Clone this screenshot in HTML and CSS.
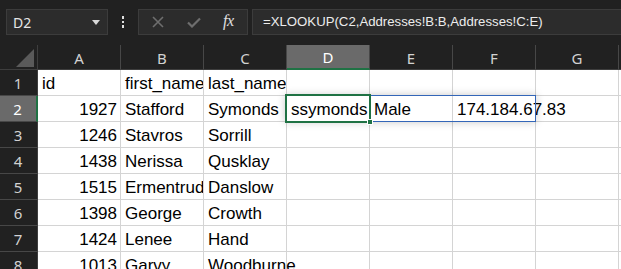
FILE: index.html
```html
<!DOCTYPE html>
<html>
<head>
<meta charset="utf-8">
<link rel="stylesheet" href="styles.css">
</head>
<body>
<div class="app">
  <div class="toolbar">
    <div class="namebox">
      <span class="name">D2</span>
      <svg class="caret" width="8" height="5" viewBox="0 0 8 5"><path d="M0 0H8L4 5Z" fill="#d8d8d8"/></svg>
    </div>
    <div class="dots"><i></i><i></i><i></i></div>
    <div class="buttons">
      <svg class="btn-x" width="12" height="12" viewBox="0 0 12 12"><path d="M1 1L11 11M11 1L1 11" stroke="#6e6e6e" stroke-width="1.6" fill="none"/></svg>
      <svg class="btn-check" width="14" height="11" viewBox="0 0 14 11"><path d="M1 5.5L5 9.5L13 1.5" stroke="#6e6e6e" stroke-width="2.2" fill="none"/></svg>
      <span class="fx">fx</span>
    </div>
    <div class="formula">=XLOOKUP(C2,Addresses!B:B,Addresses!C:E)</div>
  </div>
  <div class="sheet">
    <div class="corner"><span class="tri"></span></div>
    <div class="ch">A</div>
    <div class="ch">B</div>
    <div class="ch">C</div>
    <div class="ch ch-sel">D</div>
    <div class="ch">E</div>
    <div class="ch">F</div>
    <div class="ch">G</div>
    <div class="ch ch-last"></div>

    <div class="rh">1</div>
    <div class="c">id</div><div class="c">first_name</div><div class="c">last_name</div><div class="c"></div><div class="c"></div><div class="c"></div><div class="c"></div><div class="c c-last"></div>

    <div class="rh rh-sel">2</div>
    <div class="c n">1927</div><div class="c">Stafford</div><div class="c">Symonds</div>
    <div class="c active">ssymonds<span class="sel-shadow"></span><span class="sel-range"></span><span class="sel-active"><span class="handle"></span></span></div>
    <div class="c">Male</div><div class="c spill">174.184.67.83</div><div class="c"></div><div class="c c-last"></div>

    <div class="rh">3</div>
    <div class="c n">1246</div><div class="c">Stavros</div><div class="c">Sorrill</div><div class="c"></div><div class="c"></div><div class="c"></div><div class="c"></div><div class="c c-last"></div>

    <div class="rh">4</div>
    <div class="c n">1438</div><div class="c">Nerissa</div><div class="c">Qusklay</div><div class="c"></div><div class="c"></div><div class="c"></div><div class="c"></div><div class="c c-last"></div>

    <div class="rh">5</div>
    <div class="c n">1515</div><div class="c">Ermentrude</div><div class="c">Danslow</div><div class="c"></div><div class="c"></div><div class="c"></div><div class="c"></div><div class="c c-last"></div>

    <div class="rh">6</div>
    <div class="c n">1398</div><div class="c">George</div><div class="c">Crowth</div><div class="c"></div><div class="c"></div><div class="c"></div><div class="c"></div><div class="c c-last"></div>

    <div class="rh">7</div>
    <div class="c n">1424</div><div class="c">Lenee</div><div class="c">Hand</div><div class="c"></div><div class="c"></div><div class="c"></div><div class="c"></div><div class="c c-last"></div>

    <div class="rh">8</div>
    <div class="c n">1013</div><div class="c">Garvy</div><div class="c spill">Woodburne</div><div class="c"></div><div class="c"></div><div class="c"></div><div class="c"></div><div class="c c-last"></div>
  </div>
</div>
</body>
</html>
```
FILE: styles.css
```css
* { box-sizing: border-box; }
html, body { margin: 0; padding: 0; }
body {
  width: 621px;
  height: 269px;
  overflow: hidden;
  background: #212121;
}
.app {
  width: 621px;
  height: 269px;
  overflow: hidden;
  background: #212121;
}
.toolbar {
  height: 45px;
  display: flex;
  align-items: flex-start;
  padding: 9px 0 0 6px;
  overflow: hidden;
}
.namebox {
  width: 102px;
  height: 26px;
  background: #2c2c2c;
  border: 1px solid #3c3c3c;
  display: flex;
  align-items: center;
  justify-content: space-between;
  padding: 0 7px 0 6px;
  flex: none;
}
.name {
  font-family: "Noto Sans", "Open Sans", sans-serif;
  font-size: 14px;
  color: #e6e6e6;
}
.caret { margin-top: 1px; }
.dots {
  width: 30px;
  height: 26px;
  flex: none;
  display: flex;
  flex-direction: column;
  align-items: center;
  justify-content: center;
  gap: 2px;
}
.dots i {
  display: block;
  width: 2px;
  height: 2.5px;
  background: #e0e0e0;
}
.buttons {
  width: 110px;
  height: 26px;
  flex: none;
  background: #2c2c2c;
  border: 1px solid #3c3c3c;
  display: flex;
  align-items: center;
  padding-left: 13px;
}
.btn-x { margin-right: 23px; }
.btn-check { margin-right: 22px; margin-top: 1px; }
.fx {
  font-family: "Liberation Serif", serif;
  font-style: italic;
  font-size: 16px;
  color: #e0e0e0;
  letter-spacing: -0.5px;
  margin-top: -2px;
}
.formula {
  flex: 1;
  margin-left: 4px;
  margin-right: -10px;
  height: 26px;
  background: #2c2c2c;
  border: 1px solid #3c3c3c;
  padding-left: 10px;
  font-family: "Liberation Sans", Arial, sans-serif;
  font-size: 13.2px;
  line-height: 24px;
  color: #ececec;
  white-space: nowrap;
}
.sheet {
  display: grid;
  grid-template-columns: 38px repeat(7, 83px) 10px;
  grid-template-rows: 25px repeat(8, 26px);
  background: #ffffff;
}
.corner {
  background: #212121;
  border-right: 1px solid #3e3e3e;
  border-bottom: 1px solid #3e3e3e;
  position: relative;
}
.tri {
  position: absolute;
  right: 3px;
  bottom: 2px;
  width: 0;
  height: 0;
  border-style: solid;
  border-width: 0 0 18px 18px;
  border-color: transparent transparent #5a5a5a transparent;
}
.ch {
  background: #212121;
  border-right: 1px solid #474747;
  border-bottom: 1px solid #3e3e3e;
  font-family: "Noto Sans", "Open Sans", sans-serif;
  font-size: 15px;
  color: #d2d2d2;
  display: flex;
  align-items: center;
  justify-content: center;
  padding-top: 1px;
}
.ch-sel {
  background: #6a6a6a;
  color: #ffffff;
  border-bottom: 2px solid #1f7244;
}
.ch-last { border-right: none; }
.rh {
  background: #212121;
  border-right: 1px solid #3e3e3e;
  border-bottom: 1px solid #474747;
  font-family: "Noto Sans", "Open Sans", sans-serif;
  font-size: 15px;
  color: #d2d2d2;
  display: flex;
  align-items: center;
  justify-content: center;
  padding-right: 1px;
}
.rh-sel {
  background: #6a6a6a;
  color: #ffffff;
  border-right: 2px solid #1f7244;
}
.c {
  border-right: 1px solid #d4d4d4;
  border-bottom: 1px solid #d4d4d4;
  font-family: "Liberation Sans", Arial, sans-serif;
  font-size: 17px;
  line-height: 20px;
  color: #000000;
  display: flex;
  align-items: flex-end;
  padding: 0 3px 1px 4px;
  white-space: nowrap;
  overflow: hidden;
}
.c.n { justify-content: flex-end; padding-right: 3px; }
.c.spill { overflow: visible; position: relative; z-index: 2; }
.c-last { border-right: none; }
.c.active { overflow: visible; position: relative; }
.sel-shadow {
  position: absolute;
  left: -2px;
  top: -1px;
  width: 251px;
  height: 27px;
  box-shadow: 0 0 9px rgba(0, 0, 0, 0.22);
  z-index: 1;
}
.sel-range {
  position: absolute;
  left: 82px;
  top: -1px;
  width: 167px;
  height: 27px;
  border: 1px solid #3366b8;
  z-index: 5;
}
.sel-active {
  position: absolute;
  left: -2px;
  top: -2px;
  width: 86px;
  height: 29px;
  border: 2px solid #1f7244;
  z-index: 6;
}
.handle {
  position: absolute;
  right: -4px;
  bottom: -4px;
  width: 6px;
  height: 6px;
  background: #1f7244;
  border: 1px solid #ffffff;
}
```
